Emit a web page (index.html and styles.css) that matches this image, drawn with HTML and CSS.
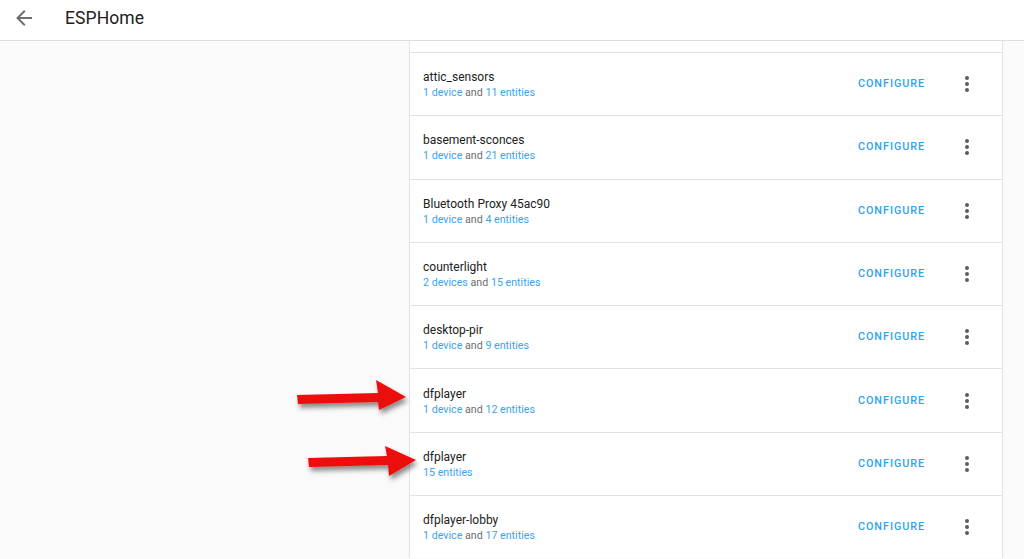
FILE: index.html
```html
<!DOCTYPE html>
<html>
<head>
<meta charset="utf-8">
<link rel="stylesheet" href="styles.css">
</head>
<body>
<header class="topbar">
  <span class="back">
    <svg viewBox="0 0 24 24" width="24" height="24"><path d="M20,11V13H8L13.5,18.5L12.08,19.92L4.16,12L12.08,4.08L13.5,5.5L8,11H20Z"/></svg>
  </span>
  <span class="title">ESPHome</span>
</header>
<main class="main">
  <div class="card">
    <div class="partial"></div>
    <div class="row"><div class="info"><div class="name">attic_sensors</div><div class="meta"><a>1 device</a> and <a>11 entities</a></div></div><span class="btn">CONFIGURE</span><span class="more"><svg viewBox="0 0 24 24" width="24" height="24"><path d="M12,16A2,2 0 0,1 14,18A2,2 0 0,1 12,20A2,2 0 0,1 10,18A2,2 0 0,1 12,16M12,10A2,2 0 0,1 14,12A2,2 0 0,1 12,14A2,2 0 0,1 10,12A2,2 0 0,1 12,10M12,4A2,2 0 0,1 14,6A2,2 0 0,1 12,8A2,2 0 0,1 10,6A2,2 0 0,1 12,4Z"/></svg></span></div>
    <div class="row"><div class="info"><div class="name">basement-sconces</div><div class="meta"><a>1 device</a> and <a>21 entities</a></div></div><span class="btn">CONFIGURE</span><span class="more"><svg viewBox="0 0 24 24" width="24" height="24"><path d="M12,16A2,2 0 0,1 14,18A2,2 0 0,1 12,20A2,2 0 0,1 10,18A2,2 0 0,1 12,16M12,10A2,2 0 0,1 14,12A2,2 0 0,1 12,14A2,2 0 0,1 10,12A2,2 0 0,1 12,10M12,4A2,2 0 0,1 14,6A2,2 0 0,1 12,8A2,2 0 0,1 10,6A2,2 0 0,1 12,4Z"/></svg></span></div>
    <div class="row"><div class="info"><div class="name">Bluetooth Proxy 45ac90</div><div class="meta"><a>1 device</a> and <a>4 entities</a></div></div><span class="btn">CONFIGURE</span><span class="more"><svg viewBox="0 0 24 24" width="24" height="24"><path d="M12,16A2,2 0 0,1 14,18A2,2 0 0,1 12,20A2,2 0 0,1 10,18A2,2 0 0,1 12,16M12,10A2,2 0 0,1 14,12A2,2 0 0,1 12,14A2,2 0 0,1 10,12A2,2 0 0,1 12,10M12,4A2,2 0 0,1 14,6A2,2 0 0,1 12,8A2,2 0 0,1 10,6A2,2 0 0,1 12,4Z"/></svg></span></div>
    <div class="row"><div class="info"><div class="name">counterlight</div><div class="meta"><a>2 devices</a> and <a>15 entities</a></div></div><span class="btn">CONFIGURE</span><span class="more"><svg viewBox="0 0 24 24" width="24" height="24"><path d="M12,16A2,2 0 0,1 14,18A2,2 0 0,1 12,20A2,2 0 0,1 10,18A2,2 0 0,1 12,16M12,10A2,2 0 0,1 14,12A2,2 0 0,1 12,14A2,2 0 0,1 10,12A2,2 0 0,1 12,10M12,4A2,2 0 0,1 14,6A2,2 0 0,1 12,8A2,2 0 0,1 10,6A2,2 0 0,1 12,4Z"/></svg></span></div>
    <div class="row"><div class="info"><div class="name">desktop-pir</div><div class="meta"><a>1 device</a> and <a>9 entities</a></div></div><span class="btn">CONFIGURE</span><span class="more"><svg viewBox="0 0 24 24" width="24" height="24"><path d="M12,16A2,2 0 0,1 14,18A2,2 0 0,1 12,20A2,2 0 0,1 10,18A2,2 0 0,1 12,16M12,10A2,2 0 0,1 14,12A2,2 0 0,1 12,14A2,2 0 0,1 10,12A2,2 0 0,1 12,10M12,4A2,2 0 0,1 14,6A2,2 0 0,1 12,8A2,2 0 0,1 10,6A2,2 0 0,1 12,4Z"/></svg></span></div>
    <div class="row"><div class="info"><div class="name">dfplayer</div><div class="meta"><a>1 device</a> and <a>12 entities</a></div></div><span class="btn">CONFIGURE</span><span class="more"><svg viewBox="0 0 24 24" width="24" height="24"><path d="M12,16A2,2 0 0,1 14,18A2,2 0 0,1 12,20A2,2 0 0,1 10,18A2,2 0 0,1 12,16M12,10A2,2 0 0,1 14,12A2,2 0 0,1 12,14A2,2 0 0,1 10,12A2,2 0 0,1 12,10M12,4A2,2 0 0,1 14,6A2,2 0 0,1 12,8A2,2 0 0,1 10,6A2,2 0 0,1 12,4Z"/></svg></span></div>
    <div class="row"><div class="info"><div class="name">dfplayer</div><div class="meta"><a>15 entities</a></div></div><span class="btn">CONFIGURE</span><span class="more"><svg viewBox="0 0 24 24" width="24" height="24"><path d="M12,16A2,2 0 0,1 14,18A2,2 0 0,1 12,20A2,2 0 0,1 10,18A2,2 0 0,1 12,16M12,10A2,2 0 0,1 14,12A2,2 0 0,1 12,14A2,2 0 0,1 10,12A2,2 0 0,1 12,10M12,4A2,2 0 0,1 14,6A2,2 0 0,1 12,8A2,2 0 0,1 10,6A2,2 0 0,1 12,4Z"/></svg></span></div>
    <div class="row"><div class="info"><div class="name">dfplayer-lobby</div><div class="meta"><a>1 device</a> and <a>17 entities</a></div></div><span class="btn">CONFIGURE</span><span class="more"><svg viewBox="0 0 24 24" width="24" height="24"><path d="M12,16A2,2 0 0,1 14,18A2,2 0 0,1 12,20A2,2 0 0,1 10,18A2,2 0 0,1 12,16M12,10A2,2 0 0,1 14,12A2,2 0 0,1 12,14A2,2 0 0,1 10,12A2,2 0 0,1 12,10M12,4A2,2 0 0,1 14,6A2,2 0 0,1 12,8A2,2 0 0,1 10,6A2,2 0 0,1 12,4Z"/></svg></span></div>
  </div>
</main>
<svg class="arrows" viewBox="0 0 1024 559" width="1024" height="559">
  <defs>
    <filter id="sh" x="-20%" y="-50%" width="140%" height="200%">
      <feDropShadow dx="2" dy="4" stdDeviation="2.5" flood-color="#000" flood-opacity="0.45"/>
    </filter>
  </defs>
  <polygon filter="url(#sh)" fill="#ec0d0d" points="297,395 378,393 376,380 406,397 379,410 378,402 298,404"/>
  <polygon filter="url(#sh)" fill="#ec0d0d" points="308,458 387,456 385,446 416,460 389,476 388,465 309,467"/>
</svg>
</body>
</html>
```

FILE: styles.css
```css
* { box-sizing: border-box; }
html, body {
  margin: 0;
  padding: 0;
  width: 1024px;
  height: 559px;
  overflow: hidden;
  background: #fafafa;
  font-family: Roboto, "Liberation Sans", sans-serif;
}
.topbar {
  height: 41px;
  background: #fff;
  border-bottom: 1px solid #dedede;
  display: flex;
  align-items: center;
  padding-left: 12px;
  padding-bottom: 5px;
}
.back {
  width: 24px;
  height: 24px;
  display: flex;
}
.back svg { fill: #6f6f6f; }
.title {
  margin-left: 29px;
  font-size: 17.5px;
  color: #212121;
  letter-spacing: 0.1px;
}
.main {
  display: flex;
  padding-left: 409px;
  padding-right: 21px;
}
.card {
  flex: 1;
  background: #fff;
  border-left: 1px solid #e3e3e3;
  border-right: 1px solid #e3e3e3;
}
.partial {
  height: 11px;
}
.row {
  height: 63.3px;
  border-top: 1px solid #e3e3e3;
  display: flex;
  align-items: center;
  padding-left: 13px;
  padding-right: 11px;
}
.info {
  flex: 1;
  display: flex;
  flex-direction: column;
  padding-top: 2px;
}
.name {
  font-size: 12px;
  line-height: 16px;
  color: #212121;
}
.meta {
  font-size: 10.7px;
  line-height: 16px;
  color: #6e6e6e;
}
.meta a { color: #3aa3ef; }
.btn {
  padding: 0 8px 1px;
  font-size: 10.8px;
  font-weight: 500;
  letter-spacing: 0.95px;
  color: #2ea3ef;
}
.more {
  margin-left: 10px;
  width: 48px;
  height: 48px;
  display: flex;
  align-items: center;
  justify-content: center;
}
.more svg { fill: #5c5c5c; }
.arrows {
  position: absolute;
  left: 0;
  top: 0;
  pointer-events: none;
}
```
